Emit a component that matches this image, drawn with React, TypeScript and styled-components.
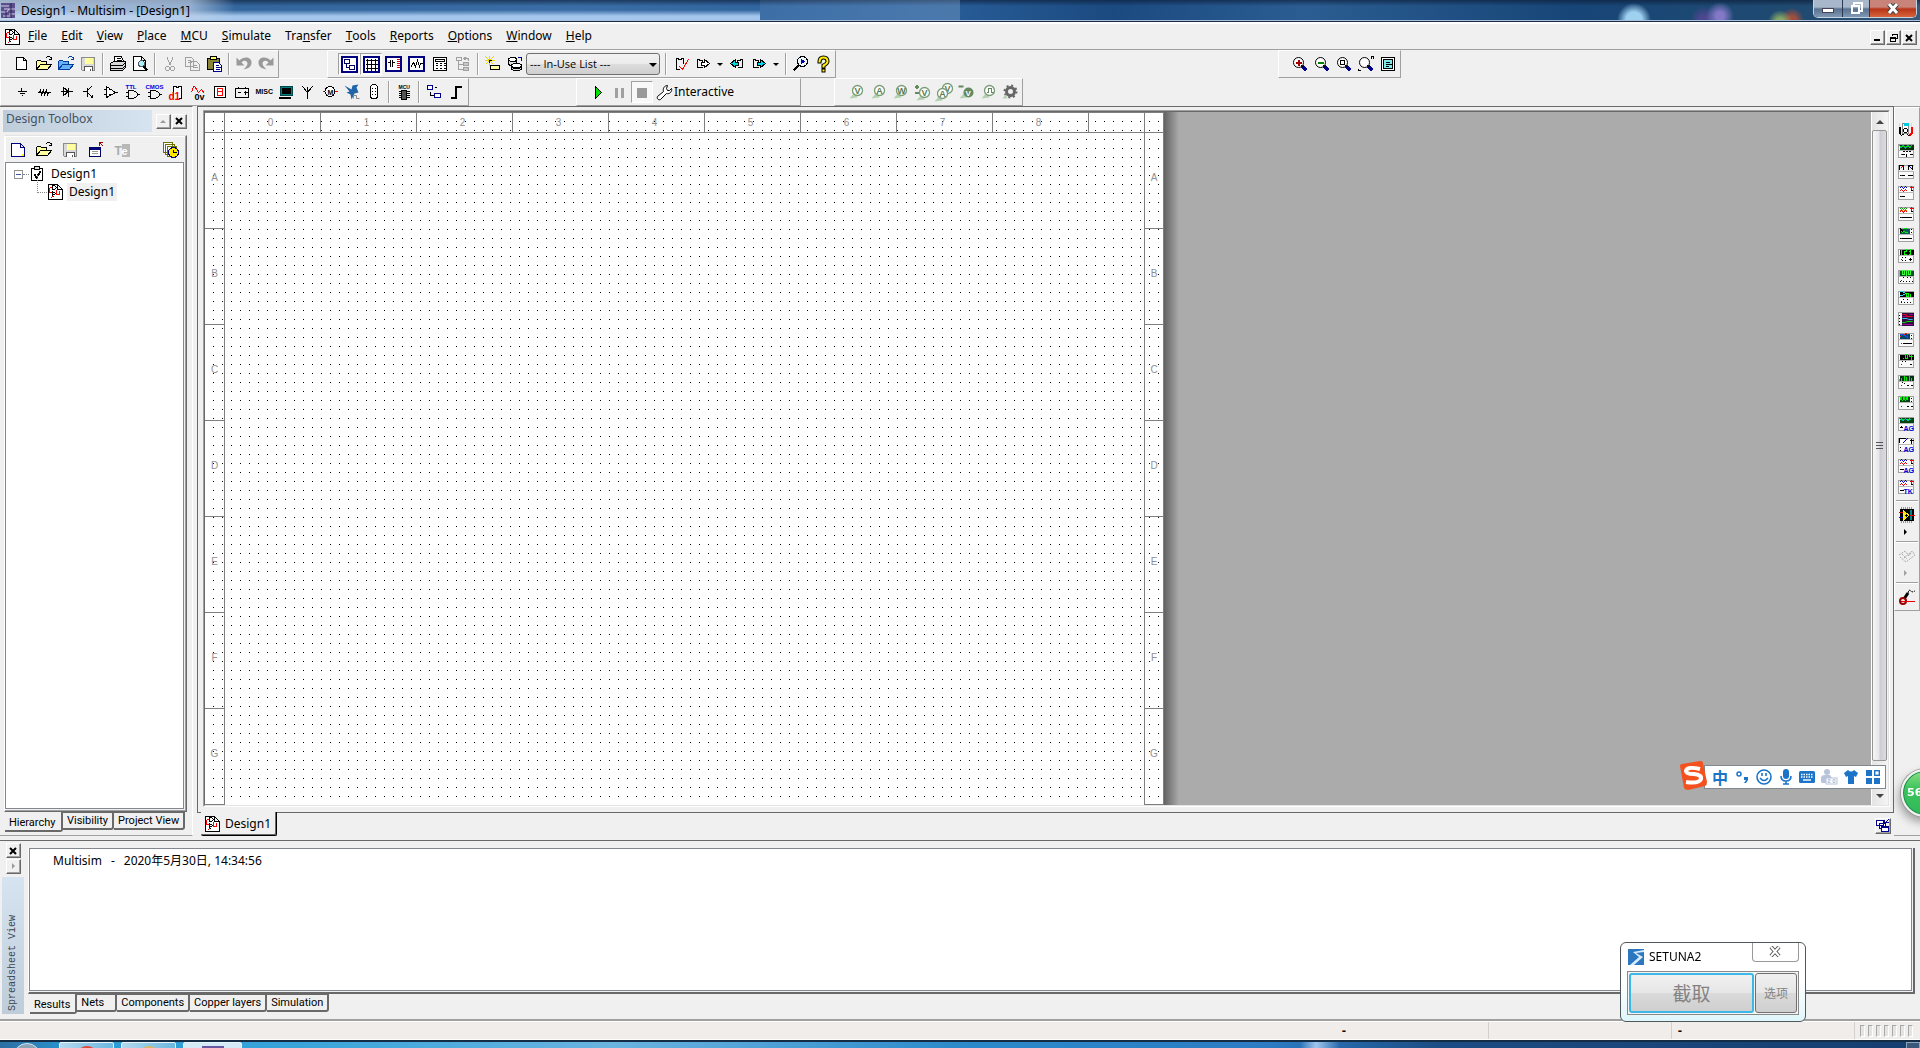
import React from "react";
import styled, { createGlobalStyle, css } from "styled-components";

const UI = `"Noto Sans", "Open Sans", "Noto Sans CJK SC", sans-serif`;
const SMALL = `Roboto, "Liberation Sans", Arial, sans-serif`;
const FACE = "#f0f0f0";
const MID = "#a0a0a0";
const DARK = "#696969";

const Global = createGlobalStyle`
  * { box-sizing: border-box; }
  body { margin: 0; background: ${FACE}; font: 12px/16px ${UI}; color: #000; overflow: hidden; }
  button, select, input { font: inherit; color: inherit; }
  button { padding: 0; border: 0; background: none; display: flex; align-items: center; justify-content: center; }
  svg { display: block; flex: none; }
  ul { list-style: none; margin: 0; padding: 0; }
`;

/* ---------- icon drawing helpers ---------- */

type LineProps = { d: string; c?: string; f?: string; w?: number };
const L = ({ d, c = "#000", f = "none", w = 1 }: LineProps) => (
  <path d={d} stroke={c} fill={f} strokeWidth={w} />
);
const T = ({ x, y, s = 6, c = "#000", children }: { x: number; y: number; s?: number; c?: string; children: React.ReactNode }) => (
  <text x={x} y={y} fontSize={s} fill={c} fontFamily="Liberation Sans, sans-serif" fontWeight="bold">{children}</text>
);
const Probe = ({ letter, x = 0, y = 0 }: { letter: string; x?: number; y?: number }) => (
  <g transform={`translate(${x} ${y})`} shapeRendering="auto">
    <path d="M1 14l5-6 3 5z" fill="#b4d2b0" />
    <circle cx="9" cy="6" r="5" fill="#fff" stroke="#7a9c76" strokeWidth="1.3" />
    <text x="9" y="9" textAnchor="middle" fontSize="9" fontWeight="bold" fill="#587c53" fontFamily="Liberation Sans, sans-serif">{letter}</text>
  </g>
);
const Glass = () => (
  <>
    <circle cx="6" cy="6" r="5" fill="#fff" stroke="#000" shapeRendering="auto" />
    <L d="M10 10l4 4" c="#00008b" w={3} />
    <L d="M9 9l2 2" />
  </>
);
const Sheet = () => <L d="M1 0H10L15 5V15H1Z M10 0V5H15" f="#fff" />;
const Circuit = () => (
  <>
    <Sheet />
    <L d="M2 3h3M2 8h2M9 5v5h3V6M3 14l2-2M2 3v5" c="#f00" />
    <L d="M5 1v4h2l2-2-2-2zM5 7l3 2-3 2zM5 11l2 2" f="#fff" />
  </>
);
const FolderArrow = ({ a, b }: { a: string; b: string }) => (
  <>
    <L d="M0 13V5l1-1h3l1 1h5v3" f={b} c={a} />
    <L d="M0 13l4-5h11l-4 5z" f={b} c={a} />
    <L d="M9 2l2-2h2l2 2M15 0v3h-3" c={a} />
  </>
);
const Floppy = () => (
  <>
    <L d="M1 1h13v13H2l-1-1z" f="#d8d8d8" c="#8c8c8c" />
    <rect x="4" y="1" width="8" height="6" fill="#ffff9c" />
    <L d="M4 14v-4h8v4M10 12v2" c="#555" f="#fff" />
  </>
);

const ICONS: Record<string, React.ReactNode> = {
  sheet: <L d="M2 1h7l3 3v9H2zM9 1v3h3" f="#fff" />,
  sheetBlue: <><L d="M1 1h9l4 4v9H1zM10 1v4h4" f="#fff" c="#000080" /><L d="M12 12h1v1h-1z" c="#ffee00" /></>,
  open: <FolderArrow a="#000" b="#ffffa0" />,
  openBlue: <FolderArrow a="#003c9c" b="#69b0f4" />,
  save: <Floppy />,
  print: <><L d="M4 5V0h7l2 5M6 2h4M6 4h5" f="#fff" /><L d="M0 7l3-2h12v6l-3 3H0z" f="#d8d8d8" /><L d="M0 9h12M0 12h12M12 9l3-3M12 12l3-3" /></>,
  preview: <><L d="M1 0h8l4 4v10H1zM9 0v4h4" f="#fff" /><circle cx="9" cy="7" r="3" fill="#a9f1f6" stroke="#556" /><L d="M11 10l4 4" w={2} /></>,
  cut: <><L d="M5 0v3l4 6M10 0v3L6 9" c="#a0a0a0" /><circle cx="5" cy="12" r="2" fill="none" stroke="#a0a0a0" /><circle cx="10" cy="12" r="2" fill="none" stroke="#a0a0a0" /></>,
  copy: <L d="M1 1h6l2 2v7H1zM3 4h3M3 6h4M6 5h6l3 3v6H6zM8 9h4M8 11h5" c="#a0a0a0" f="#f0f0f0" />,
  paste: <><L d="M1 2h12v11H1z" f="#8a8438" /><L d="M4 0h6v3H4z" f="#ffff60" /><L d="M7 6h5l3 3v6H7z" f="#fff" c="#00008b" /><L d="M9 9h3M9 11h5M9 13h4" c="#00008b" /></>,
  undo: <g shapeRendering="auto"><path d="M0 1v8h8L5 6c2-3 6-2 6 1 0 2-2 4-4 6 5-1 8-3 8-7 0-5-7-7-12-2z" fill="#999" /></g>,
  redo: <g shapeRendering="auto"><path d="M15 1v8H7l3-3C8 3 4 4 4 7c0 2 2 4 4 6-5-1-8-3-8-7 0-5 7-7 12-2z" fill="#999" /></g>,
  hier: <><L d="M0 0h15v15H0z" c="#000080" f="#fff" w={2} /><L d="M3 3h5v4H3zM8 9h5v4H8zM5 7v4h3" c="#000060" /></>,
  grid: <><L d="M0 0h15v15H0z" c="#000080" f="#fff" w={2} /><L d="M2 4h12M2 8h12M2 12h12M4 2v12M8 2v12M12 2v12" /></>,
  chart: <><L d="M0 0h15v14H0z" c="#000080" f="#fff" w={2} /><L d="M2 6h3M5 3v7M7 3v7M7 6h2" /><L d="M11 3h3M11 5h3M11 7h3M11 9h3M11 11h3" c="#d00" /></>,
  graph: <><L d="M0 0h15v14H0z" c="#000080" f="#fff" w={2} /><L d="M2 11l3-5 2 4 2-6 2 6 1-3h2" /></>,
  calc: <><L d="M1 1h13v13H1z" f="#fff" /><L d="M3 3h9v2H3z" /><L d="M3 7h2M7 7h2M11 7h2M3 9h2M7 9h2M11 9h2M3 12h2M7 12h2M11 12h2" /></>,
  tree: <><L d="M1 1h5v3H1zM3 4v9h4M3 8h4" c="#a0a0a0" /><L d="M8 6h5v3H8zM8 11h5v3H8zM8 2h5v2M11 0l-3 2 3 2" c="#a0a0a0" f="#c8c8c8" /></>,
  newComp: <><L d="M0 0l8 8M8 0L0 8M4-1v10M-1 4h10" c="#e8d800" /><L d="M3 4h3M4 3v3" /><L d="M5 9h9v4H5z" f="#ffffa0" /></>,
  db: <><L d="M1 3v5q4 3 8 0V3" f="#ddd" /><ellipse cx="5" cy="3" rx="4" ry="2" fill="#fff" stroke="#000" /><L d="M4 9v4q5 3 10 0V9" f="#ddd" /><ellipse cx="9" cy="9" rx="5" ry="2" fill="#fff" stroke="#000" /><L d="M4 11q5 3 10 0" /><L d="M10 1h4v3" c="#00008b" /></>,
  erc: <><L d="M3 13V2h2v1h3V2h2v5M2 13h4" /><L d="M6 10l3 3 6-10" c="#f00" /></>,
  out: <><L d="M2 11V3h2v1h3v3M2 11h5" /><L d="M6 6h3V3l5 4-5 4V9H6z" f="#fff" /></>,
  back: <><L d="M13 11V3h-2v1H8v3M13 11H8" /><L d="M9 6H6V3L1 7l5 4V9h3z" f="#00d8e8" /></>,
  fwd: <><L d="M2 11V3h2v1h3v3M2 11h5" /><L d="M6 6h3V3l5 4-5 4V9H6z" f="#00d8e8" /></>,
  find: <><circle cx="9" cy="5" r="5" fill="#eef6ff" stroke="#000" /><L d="M8 3l3 2-3 2z" c="#00a" f="#00a" /><L d="M5 9l-5 5" w={2} /></>,
  help: (
    <g shapeRendering="auto" fill="none" strokeLinecap="square">
      <path d="M4 5q0-4 4-4t4 4q0 2-4 4v1M8 14v0" stroke="#000" strokeWidth="4" />
      <path d="M4 5q0-4 4-4t4 4q0 2-4 4v1M8 14v0" stroke="#ffee00" strokeWidth="2" />
    </g>
  ),
  zin: <><Glass /><L d="M6 3v6M3 6h6" c="#a00000" w={2} /></>,
  zout: <><Glass /><L d="M3 6h6" c="#008000" w={2} /></>,
  zarea: <><Glass /><L d="M4 4h4v4H4z" /></>,
  zfit: <><Glass /><L d="M13 2V0h2v2M0 12v2h2" /></>,
  full: <><L d="M1 1h13v13H1z" f="#fff" /><L d="M3 3h9v9H3z" f="#80e8e8" /><L d="M5 6h4M5 8h6M5 10h3" /></>,
  ground: <L d="M7 3v4M3 7h9M5 9h5M7 11h1" />,
  res: <L d="M1 8h2l1-2 1 4 2-4 1 4 2-4 1 4 1-2h2" />,
  diode: <L d="M2 7h12M5 3v8l5-4zM10 3v9" />,
  bjt: <L d="M2 7h5M7 3v9M7 6l4-4M7 8l5 5M10 13h2v-3" />,
  opamp: <L d="M4 2v11l9-5zM1 5h3M1 10h3M13 8h2M6 5h2M6 10h2M7 9v2" f="#fff" />,
  ttl: <><T x={1} y={4} c="#0000e0">TTL</T><L d="M4 6h4q5 1 5 4t-5 4H4zM1 8h3M1 12h3M13 10h2" /></>,
  cmos: <><T x={-1} y={4} c="#0000e0">CMOS</T><L d="M4 6h4q5 1 5 4t-5 4H4zM1 8h3M1 12h3M13 10h2" /></>,
  mdig: <><L d="M5 13V2h3v1h2V2h3v12h-3" f="#fff" /><T x={0} y={15} s={10} c="#f00">d1</T></>,
  mixed: <><L d="M1 8q2-9 4-5t3 5l3-3 3 4" c="#f00" /><T x={4} y={15} s={9}>0v</T></>,
  ind: <><L d="M2 2h11v11H2z" f="#fff" /><L d="M5 4h5v7H5zM5 7h5" c="#f00" /></>,
  power: <L d="M1 4h13v9H1zM4 2v2M11 2v2M3 8h3M9 8h4M11 6v4" />,
  misc: <T x={-1} y={9} s={7}>MISC</T>,
  periph: <><L d="M2 2h12v9H2z" f="#008080" c="#004848" /><L d="M4 4h8v5H4z" f="#000" /><L d="M0 13h12" w={2} /></>,
  rf: <L d="M7 14V8L2 2M7 8l5-6M7 8V2" />,
  motor: <><L d="M0 7h3M12 7h3" c="#f00" /><circle cx="7.5" cy="7" r="5" fill="#fff" stroke="#000" /><T x={5} y={10} s={7}>M</T></>,
  ni: <g shapeRendering="auto"><path d="M0 1l7 4 1-4 6-1-2 3 2 5-4 1-3 6-1-5-4-2 3-1z" fill="#2164a8" /><path d="M9 14v-3h3v3h3" stroke="#888" fill="none" /></g>,
  conn: <><rect x="4" y="0" width="7" height="14" rx="3" fill="#fff" stroke="#000" /><L d="M6 3v1M6 6v1M6 9v1M9 3v1M9 6v1M9 9v1" /></>,
  mcu: <><T x={2} y={4} s={5}>MCU</T><L d="M5 6h5v9H5z" f="#555" /><L d="M2 7h3M2 9h3M2 11h3M2 13h3M10 7h3M10 9h3M10 11h3M10 13h3" /></>,
  block: <><L d="M1 1h5v4H1zM8 9h6v4H8z" c="#00008b" f="#fff" /><L d="M4 7v4h3M8 3h2" /></>,
  bus: <L d="M2 13h5V2h6" w={2} />,
  play: <L d="M5 2v12l6-6z" f="#00e000" />,
  pause: <L d="M4 3v10M10 3v10" c="#a0a0a0" w={3} />,
  stop: <rect x="2" y="3" width="10" height="10" fill="#999" />,
  wrench: <g shapeRendering="auto"><L d="M1 12l6-5c-1-3 1-6 4-6l-1 3 1 2 2 0 2-2c1 3-2 6-5 5l-6 6c-2 1-4-1-3-3z" f="#fff" /></g>,
  pv: <Probe letter="V" />,
  pa: <Probe letter="A" />,
  pw: <Probe letter="W" />,
  pvv: <><Probe letter="V" x={1} y={2} /><L d="M0 2h4M2 0v4M0 8h4" c="#64885f" w={2} /></>,
  pav: <><Probe letter="V" x={2} y={-2} /><Probe letter="A" x={-3} y={3} /></>,
  pref: <g shapeRendering="auto"><path d="M1 14l5-6 3 5z" fill="#b4d2b0" /><circle cx="10" cy="8" r="5" fill="#64885f" /><T x={7} y={11} s={8} c="#fff">V</T><L d="M0 2h5" c="#64885f" w={2} /></g>,
  pd: <><Probe letter="" /><L d="M6 8h2V4h3v4h2" c="#64885f" /></>,
  gear: <g shapeRendering="auto"><circle cx="8" cy="7" r="4" fill="none" stroke="#666" strokeWidth="3" /><circle cx="8" cy="7" r="6" fill="none" stroke="#666" strokeWidth="2" strokeDasharray="2 2.7" /><path d="M0 14l3-4 2 4z" fill="#b4d2b0" /></g>,
  circuit: <Circuit />,
  board: <><L d="M2 2h11v12H2z" f="#fff" /><L d="M5 0h5v3H5z" f="#ddd" /><L d="M5 8l2 3 4-6" w={2} /></>,
  close2: <><L d="M1 5h11v9H1z" f="#fff" c="#000060" /><L d="M1 6h11" c="#000080" w={2} /><L d="M3 9h6M3 11h6" c="#999" /><L d="M11 0h3M11 0v3M11 0l4 4" c="#900" /></>,
  rename: <><rect x="7" y="1" width="8" height="13" fill="#b8b8b8" /><T x={0} y={12} s={12} c="#aaa">T</T><T x={7} y={12} s={11} c="#fff">e</T></>,
  history: <><L d="M0 0h9v10H0zM2 2h9v10H2zM4 4h9v10H4z" f="#fff" c="#707000" /><circle cx="10" cy="10" r="5" fill="#ffe800" stroke="#000080" /><L d="M10 7v3h3" /></>,
  wins: <><L d="M1 2h7v5H1zM4 5h6v5H4z" f="#fff" c="#00008b" /><L d="M6 8h7v5H6z" c="#00008b" f="#fff" /><L d="M6 9h7M13 1l-3 3M9 1v3h4" c="#00008b" /></>,
};

const Icon = ({ name }: { name: string }) => (
  <svg width="16" height="16" viewBox="0 0 16 16" shapeRendering="crispEdges" overflow="visible" aria-hidden="true">
    <g transform="translate(.5 .5)">{ICONS[name]}</g>
  </svg>
);

/* Instruments share a grey frame, a small display on top and terminals below. */
type Inst = { name: string; screen: string; sw?: number; trace: [string, string][]; ports?: string; label?: string };
const WAVE = "M1 4l2-2 2 2 2-2 2 2 2-2 2 2";
const SCOPE: [string, string][] = [["M1 3l2-2 2 2 2-2 2 2", "#00d"], ["M1 6l2-2 2 2 2-2 2 2", "#e00"], ["M11 2h4M13 0v4", "#e00"]];
const INSTRUMENTS: Inst[] = [
  { name: "Multimeter", screen: "", trace: [] },
  { name: "Function generator", screen: "#083008", trace: [["M1 2l2 2 2-2 2 2 2-2 2 2 2-2", "#0d0"], ["M1 5l3-3 3 3 3-3 3 3", "#099"]], ports: "M4 8h2M7 8h2M10 8h2M3 11h3M8 10v3M11 11h3" },
  { name: "Wattmeter", screen: "#f0f0f0", trace: [["M1 5V1h4v4M10 5V1h4v4", "#000"], ["M2 4l2-2", "#e00"], ["M11 2l3 3", "#00e"]], ports: "M1 11h5M9 11h5" },
  { name: "Oscilloscope", screen: "#fff", sw: 10, trace: SCOPE, ports: "M1 11h5M12 5h2" },
  { name: "Four channel oscilloscope", screen: "#fff", sw: 10, trace: [["M1 3l2-2 2 2 2-2 2 2", "#0a0"], ["M1 5l2-2 2 2 2-2 2 2", "#e60"], ["M1 6l2-2 2 2 2-2 2 2", "#e00"], ["M11 2h4M13 0v4", "#e00"]], ports: "M1 11h12M12 5h2" },
  { name: "Bode plotter", screen: "#0a5858", sw: 10, trace: [["M1 1l3 4 3-2M5 1h4M6 5h3", "#0e0"], ["M2 5V1l3 4", "#000"]], ports: "M1 11h12M13 1v1M13 4v1" },
  { name: "Frequency counter", screen: "#000", trace: [["M3 1v5M6 1h2v2H6v3h2M10 1h2v5h-2M10 3h2", "#0f0"]], ports: "M3 9h1M6 9h1M3 12h1M6 12h1M10 11h3M12 9v3" },
  { name: "Word generator", screen: "#052", trace: [["M1 1v5M4 1h2v4H4zM8 1v5M10 1h2v4h-2z", "#3f3"]], ports: "M4 8h1M8 8h1M11 8h1M1 12h1M4 12h1M7 12h1M10 12h1M13 12h1" },
  { name: "Logic converter", screen: "#000", trace: [["M1 1h3l3 2-3 2H1", "#3de"], ["M8 3h2v3H8zM12 3v3", "#0f0"]], ports: "M4 9h1M8 9h1M2 12h1M5 12h1M8 12h1M11 12h1" },
  { name: "Logic analyzer", screen: "#000", trace: [["M1 3h5v2h8", "#f02"], ["M1 5h4M10 3h4", "#a0a"], ["M1 7h6l2 1h5", "#3cf"], ["M1 11h4l2-1h7", "#0e0"], ["M1 13h13", "#a0a"]] },
  { name: "IV analyzer", screen: "#046", sw: 10, trace: [["M1 5q4-5 9-3", "#e22"], ["M1 2h3l6 3", "#24f"]], ports: "M4 11h9M13 2v1M13 5v1" },
  { name: "Distortion analyzer", screen: "#000", trace: [["M4 5h1M7 1h2v4H7zM11 1v2h3M13 1v5", "#0e0"]], ports: "M3 8h1M6 8h1M11 11h2" },
  { name: "Spectrum analyzer", screen: "#031", trace: [["M1 6V4M3 6V3M6 6V1M8 6V2M11 6V1M13 6V3", "#0e0"]], ports: "M3 8h1M5 9h1M8 11h2M12 11h2" },
  { name: "Network analyzer", screen: "#041", sw: 10, trace: [["M1 1l3 4 3-4 3 4M1 5l3-4 3 4 3-4", "#0e0"]], ports: "M8 11h2M12 11h2M13 2v1M13 5v1" },
  { name: "Agilent function generator", screen: "#041", trace: [[WAVE, "#0e0"], ["M1 2l3 2 3-2 3 2 3-2", "#0bb"]], label: "AG", ports: "M1 11h3M3 9v2" },
  { name: "Agilent multimeter", screen: "#fff", sw: 10, trace: [["M1 5V1h6", "#000"], ["M4 6l5-5", "#00d"]], label: "AG", ports: "M11 3h4M13 1v5M2 9v1M2 12v1" },
  { name: "Agilent oscilloscope", screen: "#fff", sw: 10, trace: SCOPE, label: "AG", ports: "M1 11h4M12 5h2" },
  { name: "Tektronix oscilloscope", screen: "#fff", sw: 10, trace: SCOPE, label: "TK", ports: "M1 11h4M12 5h2" },
];

const InstIcon = ({ it }: { it: Inst }) => (
  <svg width="16" height="16" viewBox="0 0 16 16" shapeRendering="crispEdges" overflow="visible" aria-hidden="true">
    <g transform="translate(-.5 .5)">
      {it.screen === "" ? (
        <>
          <L d="M1 0v4M13 0v4" c="#fe0" />
          <L d="M1 4v7" w={2} />
          <L d="M1 11l2 2 4-3 3 3 2-1" />
          <L d="M13 4v7l-2 2" c="#f00" w={2} />
          <L d="M4 1h6v10H4z" f="#fff" c="#888" />
          <L d="M5 2h5" c="#0cd" w={3} />
          <circle cx="7" cy="8" r="2" stroke="#000" fill="#fff" />
        </>
      ) : (
        <>
          <L d="M0 1h15v13H0z" c="#a0a0a0" f="#fafafa" />
          {it.name === "Logic analyzer"
            ? <rect x="3" y="1" width="12" height="13" fill="#301040" />
            : <rect x="1" y="1" width={it.sw ?? 14} height="6" fill={it.screen} />}
          {it.name === "Logic analyzer" && <L d="M1 3v1M1 6v1M1 9v1M1 12v1" />}
          {it.name !== "Logic analyzer" && <L d="M0 7h15" c="#b8b8b8" />}
          <g transform={it.name === "Logic analyzer" ? "translate(3 0) scale(.8 1)" : undefined}>
            {it.trace.map(([d, c], i) => <L key={i} d={d} c={c} />)}
          </g>
          {it.ports && <L d={it.ports} />}
          {it.ports && !it.label && <L d="M2 11h1" c="#c00" />}
          {it.label && <T x={5} y={14} s={7} c="#00d">{it.label}</T>}
        </>
      )}
    </g>
  </svg>
);

/* ---------- window frame ---------- */

const Desktop = styled.div`
  height: 100vh;
  display: flex;
  flex-direction: column;
  background: ${FACE};
`;

const TitleBar = styled.header`
  height: 22px;
  flex: none;
  display: flex;
  align-items: flex-start;
  justify-content: space-between;
  border-bottom: 1px solid #1c2c44;
  box-shadow: inset 0 -1px #a9c0dc;
  background:
    radial-gradient(circle at 1634px 20px, #9ed0f0 0 8px, transparent 17px),
    radial-gradient(circle at 1720px 16px, rgba(142, 126, 208, .9) 0 4px, transparent 14px),
    radial-gradient(circle at 1704px 20px, rgba(110, 70, 160, .6) 0 4px, transparent 14px),
    radial-gradient(circle at 1780px 22px, rgba(140, 176, 100, .9) 0 4px, transparent 12px),
    radial-gradient(circle at 1792px 20px, rgba(190, 80, 50, .8) 0 4px, transparent 12px),
    linear-gradient(90deg, rgba(205, 218, 238, .75) 0, rgba(190, 208, 232, .7) 190px, transparent 235px),
    linear-gradient(180deg, transparent 10px, rgba(176, 208, 244, .9) 16px) 0 0 / 760px 100% no-repeat,
    linear-gradient(90deg, rgba(160, 190, 225, .1), rgba(160, 190, 225, .3)) 760px 0 / 200px 100% no-repeat,
    linear-gradient(180deg, rgba(10, 24, 48, .6), transparent 6px),
    linear-gradient(100deg, #2f6299 0, #3a6da5 30%, #2a5f9a 48%, #1b4a80 58%, #2b5d92 68%, #174577 82%, #204a70 94%, #3a5878 100%);
`;
const Caption = styled.h1`
  margin: 0;
  padding: 3px 0 0 1px;
  display: flex;
  gap: 6px;
  font: 12px/16px ${UI};
`;
const FrameButtons = styled.div`
  display: flex;
  height: 18px;
  margin-right: 3px;
  border: 1px solid #c4d2e2;
  border-top: 0;
  border-radius: 0 0 5px 5px;
  overflow: hidden;
  background: #2a3a50;
  gap: 1px;
`;
const FrameButton = styled.button<{ $w: number; $close?: boolean }>`
  width: ${(p) => p.$w}px;
  background: ${(p) => (p.$close
    ? "linear-gradient(#c88478 0 7px, #b83418 9px, #d8643c)"
    : "linear-gradient(#a8b8ca 0 7px, #5a7290 9px, #8098b4)")};
`;

const MenuBar = styled.nav`
  height: 28px;
  flex: none;
  display: flex;
  align-items: center;
  padding: 0 3px 0 4px;
  border-top: 2px solid #fff;
  border-bottom: 1px solid ${MID};
`;
const MenuList = styled.ul`
  flex: 1;
  display: flex;
  gap: 14px;
  padding: 0 0 2px 8px;
`;
const MenuItem = styled.button`
  height: 20px;
  white-space: pre;
`;
const raised = css`
  background: ${FACE};
  border: 1px solid;
  border-color: #fff ${DARK} ${DARK} #fff;
  box-shadow: inset -1px -1px ${MID};
`;
const MiniButton = styled.button`
  ${raised}
  width: 15px;
  height: 15px;
  flex: none;
`;
const MiniGroup = styled.div`
  display: flex;
  gap: 1px;
  padding-top: 2px;
`;

const ToolRow = styled.div`
  height: 28px;
  flex: none;
  display: flex;
`;
const ToolBar = styled.div<{ $gap?: number; $w?: number }>`
  display: flex;
  align-items: center;
  margin-left: ${(p) => p.$gap ?? 0}px;
  width: ${(p) => (p.$w ? `${p.$w}px` : "auto")};
  padding: 0 1px 0 10px;
  border: 1px solid;
  border-color: #fff ${MID} ${MID} #fff;
`;
const Tool = styled.button<{ $on?: boolean; $wide?: boolean }>`
  width: ${(p) => (p.$wide ? 24 : 22)}px;
  height: 22px;
  flex: none;
  ${(p) => p.$on && css`
    background: #f8f8f8;
    border: 1px solid;
    border-color: ${MID} #fff #fff ${MID};
  `}
`;
const Sep = styled.span`
  width: 8px;
  height: 22px;
  flex: none;
  display: flex;
  justify-content: center;
  &::before { content: ""; width: 2px; background: linear-gradient(90deg, ${MID} 50%, #fff 50%); }
`;
const Drop = styled.button`
  width: 12px;
  height: 22px;
  &::before { content: ""; border: 3px solid transparent; border-top-color: #000; margin-top: 3px; }
`;
const ComboWrap = styled.label`
  width: 136px;
  position: relative;
  &::after {
    content: "";
    position: absolute;
    right: 5px;
    top: 10px;
    border: 4px solid transparent;
    border-top-color: #000;
    pointer-events: none;
  }
`;
const Combo = styled.select`
  width: 134px;
  height: 22px;
  display: block;
  appearance: none;
  padding: 0 3px;
  border: 1px solid #707070;
  border-radius: 3px;
  background: linear-gradient(#f2f2f2, #ebebeb 50%, #dddddd 50%, #cfcfcf);
  font: 11px/16px "Open Sans", "Noto Sans", sans-serif;
`;
const ModeButton = styled.button`
  height: 22px;
  padding: 0 3px;
  gap: 2px;
`;

/* ---------- work area ---------- */

const Work = styled.main`
  flex: 1;
  min-height: 0;
  display: flex;
`;
const LeftDock = styled.aside`
  width: 193px;
  flex: none;
  margin: 0 4px 4px 0;
  display: flex;
  flex-direction: column;
  padding: 3px 5px 3px 3px;
  border-top: 1px solid ${DARK};
  border-right: 1px solid #fff;
  border-bottom: 1px solid ${MID};
`;
const DockHead = styled.div`
  height: 22px;
  display: flex;
  align-items: center;
  gap: 1px;
`;
const DockTitle = styled.h2`
  flex: 1;
  height: 22px;
  margin: 0 3px 0 0;
  padding: 0 3px;
  font: 12px/18px ${UI};
  color: #44525f;
  background: linear-gradient(90deg, #bfcddb, #d6e4f2);
`;
const Panel = styled.section`
  flex: 1;
  min-height: 0;
  margin: 3px 0 0 1px;
  display: flex;
  flex-direction: column;
  border: 1px solid;
  border-color: #e3e3e3 ${DARK} ${DARK} #fff;
  box-shadow: inset -1px -1px ${MID}, inset 1px 1px #fff;
  padding: 1px 2px 2px 0;
`;
const PanelTools = styled.div`
  height: 25px;
  flex: none;
  display: flex;
  align-items: center;
  justify-content: space-between;
  padding: 0 2px;
`;
const PanelGroup = styled.div`
  display: flex;
  gap: 4px;
`;
const Tree = styled.ul`
  flex: 1;
  border: 1px solid #828790;
  background: #fff;
`;
const TreeRow = styled.li<{ $child?: boolean }>`
  height: 18px;
  display: flex;
  align-items: center;
  margin-top: ${(p) => (p.$child ? 0 : 2)}px;
  padding-left: ${(p) => (p.$child ? 31 : 8)}px;
`;
const Expander = styled.button`
  width: 9px;
  height: 9px;
  border: 1px solid #919191;
  background: #fff;
  &::before { content: ""; width: 5px; height: 1px; background: #3b5a9a; }
`;
const Twig = styled.span<{ $child?: boolean }>`
  width: ${(p) => (p.$child ? 10 : 6)}px;
  height: ${(p) => (p.$child ? 18 : 1)}px;
  margin-bottom: ${(p) => (p.$child ? 17 : 0)}px;
  border: 0 dotted #888;
  border-width: ${(p) => (p.$child ? "0 0 1px 1px" : "1px 0 0")};
`;
const NodeLabel = styled.span<{ $sel?: boolean }>`
  margin-left: 4px;
  padding: 0 2px;
  line-height: 18px;
  background: ${(p) => (p.$sel ? FACE : "none")};
`;
const Tabs = styled.div`
  height: 20px;
  flex: none;
  display: flex;
  align-items: flex-start;
  margin-left: 2px;
`;
const Tab = styled.button<{ $on?: boolean; $w?: number }>`
  height: ${(p) => (p.$on ? 20 : 18)}px;
  padding: ${(p) => (p.$on ? "4px 5px 0 4px" : "1px 4px 0 4px")};
  min-width: ${(p) => p.$w ?? 0}px;
  justify-content: flex-start;
  font: 11px/14px ${SMALL};
  white-space: pre;
  border: solid ${DARK};
  border-width: 0 2px 2px 0;
  border-color: ${MID} ${DARK} ${DARK} #fff;
  border-radius: 0 0 3px 0;
  ${(p) => !p.$on && css`border-top: 1px solid ${DARK};`}
`;

const Mdi = styled.section`
  flex: 1;
  min-width: 0;
  display: flex;
  flex-direction: column;
`;
const MdiClient = styled.div`
  flex: 1;
  min-height: 0;
  display: flex;
  border: 1px solid ${DARK};
  border-bottom: 0;
  padding: 3px 3px 5px 5px;
`;
const Frame = styled.div`
  flex: 1;
  min-width: 0;
  display: flex;
  border: 1px solid;
  border-color: ${MID} #fff #fff ${MID};
`;
const Viewport = styled.div`
  flex: 1;
  min-width: 0;
  display: flex;
  overflow: hidden;
  background: #ababab;
  border: 1px solid;
  border-color: ${DARK} #e3e3e3 #e3e3e3 ${DARK};
`;
const SheetArea = styled.div`
  flex: 1;
  min-width: 0;
  display: flex;
  overflow: hidden;
`;
const DrawingSheet = styled.div`
  width: 959px;
  flex: none;
  display: grid;
  grid-template-columns: 20px 1fr 19px;
  grid-template-rows: 20px 1fr;
  border: solid #7f7f7f;
  border-width: 1px 1px 0 0;
  background: conic-gradient(from 270deg at 1px 1px, #000 90deg, transparent 0) 8px 8px / 9px 9px #fff;
  font: 10px/12px "Liberation Sans", Arial, sans-serif;
  color: #909090;
`;
const SheetShadow = styled.div`
  width: 15px;
  flex: none;
  background: linear-gradient(90deg, #626262, #ababab);
`;
const Corner = styled.div<{ $right?: boolean }>`
  border: solid #7f7f7f;
  border-width: ${(p) => (p.$right ? "0 0 1px 1px" : "0 1px 1px 0")};
`;
const TopRuler = styled.div`
  display: flex;
  border-bottom: 1px solid #7f7f7f;
`;
const SideRuler = styled.div<{ $right?: boolean }>`
  overflow: hidden;
  border: solid #7f7f7f;
  border-width: ${(p) => (p.$right ? "0 0 0 1px" : "0 1px 0 0")};
`;
const HCell = styled.div`
  width: 96px;
  padding: 4px 4px 0 0;
  text-align: center;
  border-right: 1px solid #7f7f7f;
`;
const VCell = styled.div`
  height: 96px;
  display: flex;
  align-items: center;
  justify-content: center;
  padding-bottom: 6px;
  border-bottom: 1px solid #7f7f7f;
`;
const ScrollBar = styled.div`
  width: 17px;
  flex: none;
  display: flex;
  flex-direction: column;
  padding-right: 1px;
  border-left: 1px solid #fff;
  background: linear-gradient(90deg, #e4e4e4, #f4f4f4);
`;
const ScrollArrow = styled.button<{ $down?: boolean }>`
  height: 18px;
  flex: none;
  &::before {
    content: "";
    border: 4px solid transparent;
    ${(p) => (p.$down ? "border-top-color: #444; margin-top: 4px;" : "border-bottom-color: #444; margin-bottom: 2px;")}
  }
`;
const Thumb = styled.div`
  flex: 1;
  margin-bottom: 26px;
  display: flex;
  flex-direction: column;
  align-items: center;
  justify-content: center;
  gap: 2px;
  border: 1px solid #959595;
  border-radius: 2px;
  background: linear-gradient(90deg, #f6f6f6, #e6e6ea 45%, #ccccd2 55%, #dcdce0);
  & > i { width: 7px; height: 1px; background: #555; }
`;
const MdiTabs = styled.div`
  height: 28px;
  flex: none;
  display: flex;
  justify-content: space-between;
  align-items: flex-start;
  padding: 0 3px 0 4px;
  background: linear-gradient(${DARK}, ${DARK}) 0 0 / 100% 1px no-repeat;
`;
const MdiTab = styled.button`
  height: 24px;
  padding: 1px 5px 0 3px;
  gap: 5px;
  background: ${FACE};
  border: solid #000;
  border-width: 0 1px 1px 0;
  box-shadow: inset -1px -1px ${DARK};
  border-radius: 0 0 2px 2px;
`;
const WindowList = styled.button`
  ${raised}
  width: 16px;
  height: 16px;
  margin-top: 6px;
  overflow: hidden;
`;
const RightDock = styled.aside`
  width: 26px;
  flex: none;
  margin-bottom: 4px;
  border-top: 1px solid ${MID};
  border-bottom: 1px solid ${MID};
`;
const InstBar = styled.div`
  display: flex;
  flex-direction: column;
  align-items: center;
  padding: 11px 0 2px;
  border: 1px solid;
  border-color: #fff ${MID} ${MID} #fff;
`;
const InstButton = styled.button<{ $tall?: boolean }>`
  width: 22px;
  height: ${(p) => (p.$tall ? 22 : 21)}px;
`;
const HSep = styled.span`
  width: 22px;
  height: 7px;
  flex: none;
  background: linear-gradient(${MID} 50%, #fff 50%) center / 100% 2px no-repeat;
`;
const Flyout = styled.button<{ $off?: boolean }>`
  height: 12px;
  width: 22px;
  &::before { content: ""; border: 3px solid transparent; border-left-color: ${(p) => (p.$off ? MID : "#000")}; }
`;

/* ---------- spreadsheet view, status, taskbar ---------- */

const Spread = styled.section`
  height: 180px;
  flex: none;
  display: flex;
  gap: 4px;
  padding: 2px 5px 5px 2px;
  border-top: 1px solid ${DARK};
  border-bottom: 1px solid ${MID};
`;
const SpreadSide = styled.div`
  width: 22px;
  flex: none;
  display: flex;
  flex-direction: column;
  align-items: center;
  gap: 1px;
`;
const SpreadTitle = styled.h2`
  flex: 1;
  width: 22px;
  margin: 2px 0 0;
  padding: 3px 4px;
  writing-mode: vertical-rl;
  transform: rotate(180deg);
  font: 10px/14px "Liberation Mono", monospace;
  color: #3c4650;
  background: linear-gradient(#bfcddb, #d6e4f2);
`;
const SpreadBody = styled.div`
  flex: 1;
  min-width: 0;
  display: flex;
  flex-direction: column;
`;
const Results = styled.div`
  flex: 1;
  min-height: 0;
  margin-top: 5px;
  display: flex;
  border: solid;
  border-width: 0 2px 2px 1px;
  border-color: #fff ${DARK} ${DARK} #fff;
  padding: 0 1px 1px 0;
`;
const Log = styled.div`
  flex: 1;
  display: flex;
  gap: 9px;
  padding: 4px 23px;
  border: 1px solid #828790;
  background: #fff;
`;
const StatusBar = styled.footer`
  height: 20px;
  flex: none;
  display: flex;
  border-top: 1px solid ${MID};
  border-bottom: 1px solid #fff;
  background: #f0edeb;
  box-shadow: inset 0 1px #fff;
`;
const StatusCell = styled.span<{ $w?: number; $end?: boolean }>`
  flex: ${(p) => (p.$w ? "none" : 1)};
  width: ${(p) => (p.$w ? `${p.$w}px` : "auto")};
  margin: 1px 0 0;
  padding: 1px 0 0 6px;
  border-right: 1px solid ${(p) => (p.$end ? "transparent" : "#d4d0ce")};
  font-weight: bold;
`;
const Progress = styled.span`
  width: 65px;
  flex: none;
  display: flex;
  gap: 3px;
  padding: 4px 0 2px 5px;
  & > i { width: 5px; border: 1px solid; border-color: #a8a8a8 #fff #fff #a8a8a8; background: #e4e4e0; }
`;
const Taskbar = styled.div`
  height: 8px;
  flex: none;
  display: flex;
  overflow: hidden;
  border-top: 2px solid #142c44;
  background:
    linear-gradient(90deg, transparent, rgba(190, 220, 255, .8) 40%, transparent) 1300px 0 / 40px 100% no-repeat,
    linear-gradient(90deg, #2a6ea4 0, #2a9ad4 4%, #38a4da 15%, #6ab4e0 32%, #2c8aca 50%, #2c7cc4 66%, #1c4c84 75%, #163e70 100%);
`;
const Orb = styled.button`
  width: 28px;
  height: 28px;
  margin: 1px 18px 0 13px;
  flex: none;
  border: 1px solid #d4e4ee;
  border-radius: 50%;
  background: #8aa4b8;
`;
const TaskButton = styled.button<{ $dot: string; $active?: boolean }>`
  width: ${(p) => (p.$active ? 59 : 55)}px;
  height: 30px;
  flex: none;
  margin-right: 7px;
  border: 1px solid #e4f4fc;
  border-radius: 2px;
  align-items: flex-start;
  background: ${(p) => (p.$active ? "#d4eaf6" : "linear-gradient(90deg, #b4d8ee, #6cb8e0)")};
  &::before { content: ""; width: 22px; height: 22px; margin-top: 3px; border-radius: ${(p) => (p.$active ? 0 : 11)}px; background: ${(p) => p.$dot}; }
`;
const TaskSpace = styled.div`flex: 1;`;
const ShowDesktop = styled.button`
  width: 14px;
  height: 10px;
  border: 1px solid #8ca4bc;
  background: #3c5878;
`;

/* ---------- floating windows ---------- */

const Setuna = styled.section`
  position: fixed;
  right: 114px;
  bottom: 26px;
  width: 186px;
  height: 80px;
  padding: 0 6px 6px;
  display: flex;
  flex-direction: column;
  border: 1px solid #50585c;
  border-radius: 6px;
  background: linear-gradient(#fff 50%, #dff6fa);
`;
const SetunaHead = styled.div`
  height: 28px;
  display: flex;
  align-items: flex-start;
  gap: 5px;
  padding-left: 1px;
  & > svg { margin-top: 6px; }
`;
const SetunaTitle = styled.h2`
  flex: 1;
  margin: 0;
  font: 12px/28px ${UI};
`;
const SetunaClose = styled.button`
  width: 47px;
  height: 19px;
  border: 1px solid #999;
  border-top: 0;
  border-radius: 0 0 4px 4px;
`;
const SetunaBody = styled.div`
  flex: 1;
  display: flex;
  gap: 1px;
  padding: 1px;
  border: 1px solid #888;
  background: #f4f4f4;
`;
const SetunaButton = styled.button<{ $main?: boolean }>`
  flex: ${(p) => (p.$main ? 1 : "none")};
  width: 42px;
  border: ${(p) => (p.$main ? "2px solid #3cb8e8" : "1px solid #707070")};
  border-radius: 3px;
  background: linear-gradient(#f0f0f0, #e6e6e6 50%, #dadada 50%, #cfcfcf);
  color: #838383;
  font: ${(p) => (p.$main ? 19 : 12)}px/24px "Noto Sans CJK SC", sans-serif;
`;
const Ime = styled.div`
  position: fixed;
  right: 34px;
  top: 765px;
  width: 182px;
  height: 24px;
  display: flex;
  align-items: center;
  justify-content: space-around;
  padding: 0 1px 0 4px;
  border: 1px solid #808890;
  background: #fff;
`;
const ImeLogo = styled.div`
  position: fixed;
  right: 212px;
  top: 761px;
`;
const ImeButton = styled.button`
  width: 22px;
  height: 20px;
  font: bold 16px/20px "Noto Sans CJK SC", sans-serif;
  color: #1c74c8;
`;
const Ball = styled.div`
  position: fixed;
  right: -29px;
  top: 769px;
  width: 48px;
  height: 48px;
  padding: 14px 0 0 4px;
  border: 2px solid #f0f4f0;
  border-radius: 50%;
  background: linear-gradient(#8ce088, #3cc45c 40%, #2fb858);
  box-shadow: 0 0 0 1px #999, inset 0 0 0 1px #1c8a50, -2px 5px 10px rgba(0, 0, 0, .35);
  font: bold 11px/16px "DejaVu Sans", sans-serif;
  color: #fff;
`;

const B = "#1c74c8";
const IME: [string, React.ReactNode][] = [
  ["Chinese", "中"],
  ["Punctuation", <svg width="14" height="16" viewBox="0 0 14 16"><circle cx="4" cy="5" r="2" fill="none" stroke={B} strokeWidth="1.5" /><path d="M9 8h4v3l-2 3H9l2-3H9z" fill={B} /></svg>],
  ["Emoji", <svg width="16" height="16" viewBox="0 0 16 16" fill="none" stroke={B} strokeWidth="1.6"><circle cx="8" cy="8" r="7" /><path d="M4 9q4 5 8 0M6 4v3M10 4v3" /></svg>],
  ["Voice", <svg width="14" height="16" viewBox="0 0 14 16"><rect x="4" y="0" width="6" height="10" rx="3" fill={B} /><path d="M2 7q0 5 5 5t5-5M7 12v3M4 15h6" fill="none" stroke={B} strokeWidth="1.6" /></svg>],
  ["Keyboard", <svg width="16" height="12" viewBox="0 0 16 12"><rect width="16" height="12" rx="1.5" fill={B} /><path d="M2 3.5h12M2 6h12" stroke="#fff" strokeDasharray="1.5 1" strokeWidth="1.4" /><path d="M4 9h8" stroke="#fff" strokeWidth="1.4" /></svg>],
  ["Account", <svg width="17" height="16" viewBox="0 0 17 16"><circle cx="6" cy="3" r="3" fill="#b8c4da" /><path d="M0 13V9q0-3 4-3h5l2 3v5H1z" fill="#b8c4da" /><rect x="5" y="9" width="11" height="6" fill="#fff" stroke="#b8c4da" /><path d="M7 10.500h2v1.500h-2v1.500h2.500M12 10.500h2v3h-2z" fill="none" stroke="#b8c4da" /></svg>],
  ["Skin", <svg width="14" height="14" viewBox="0 0 14 14"><path d="M4 0q3 3 6 0l4 3-2 4-2-1v8H4V6L2 7 0 3z" fill={B} /></svg>],
  ["Toolbox", <svg width="14" height="14" viewBox="0 0 14 14"><path d="M0 0h6v6H0zM0 8h6v6H0zM8 8h6v6H8z" fill={B} /><rect x="8.700" y=".7" width="4.600" height="4.600" fill="none" stroke={B} strokeWidth="1.400" /></svg>],
];

const MENU: [string, string, string][] = [
  ["", "F", "ile"], ["", "E", "dit"], ["", "V", "iew"], ["", "P", "lace"], ["", "M", "CU"], ["", "S", "imulate"],
  ["Tra", "n", "sfer"], ["", "T", "ools"], ["", "R", "eports"], ["", "O", "ptions"], ["", "W", "indow"], ["", "H", "elp"],
];

/* A "|" entry is a separator, a "v" entry a drop-down arrow. */
const Tools = ({ items, on = [], wide = [] }: { items: string[]; on?: string[]; wide?: string[] }) => (
  <>
    {items.map((n, i) =>
      n === "|" ? <Sep key={i} /> : n === "v" ? <Drop key={i} aria-label="More" /> : (
        <Tool key={i} aria-label={n} $on={on.includes(n)} $wide={wide.includes(n)}><Icon name={n} /></Tool>
      ))}
  </>
);

const Cross = () => (
  <svg width="9" height="8" viewBox="0 0 9 8"><path d="M1 1l6 6M7 1L1 7" stroke="#000" strokeWidth="2" /></svg>
);

export default function App() {
  return (
    <Desktop>
      <Global />
      <TitleBar>
        <Caption>
          <svg width="14" height="16" viewBox="0 0 14 16">
            <rect width="14" height="15" fill="#5c508c" />
            <path d="M0 3h8M3 6h11M0 9h6l2-3M8 11h6M2 13h8" stroke="#d4cce8" fill="none" />
            <path d="M10 0v15M5 8v7" stroke="#2c2458" />
          </svg>
          Design1 - Multisim - [Design1]
        </Caption>
        <FrameButtons>
          <FrameButton $w={28} aria-label="Minimize"><svg width="12" height="10"><rect x=".5" y="4.500" width="11" height="4" fill="#fff" stroke="#445" /></svg></FrameButton>
          <FrameButton $w={26} aria-label="Restore"><svg width="13" height="13" fill="none" stroke="#fff" strokeWidth="2"><path d="M4 3V1h8v8h-2" /><rect x="2" y="4" width="7" height="7" /></svg></FrameButton>
          <FrameButton $w={46} $close aria-label="Close"><svg width="13" height="12"><path d="M2 1l8 9M10 1l-8 9" stroke="#444" strokeWidth="5" /><path d="M2 1l8 9M10 1l-8 9" stroke="#fff" strokeWidth="3" /></svg></FrameButton>
        </FrameButtons>
      </TitleBar>

      <MenuBar>
        <Icon name="circuit" />
        <MenuList>
          {MENU.map(([a, u, b]) => (
            <li key={a + u + b}><MenuItem>{a}<u>{u}</u>{b}</MenuItem></li>
          ))}
        </MenuList>
        <MiniGroup>
          <MiniButton aria-label="Minimize sheet"><svg width="9" height="9"><rect x="1" y="6" width="6" height="2" /></svg></MiniButton>
          <MiniButton aria-label="Restore sheet"><svg width="9" height="9" fill="none" stroke="#000" shapeRendering="crispEdges"><path d="M3 3V1h5v4H6M3 1.500h5" /><path d="M1 4h5v4H1zM1 5h5" /></svg></MiniButton>
          <MiniButton aria-label="Close sheet"><Cross /></MiniButton>
        </MiniGroup>
      </MenuBar>

      <ToolRow>
        <ToolBar>
          <Tools items={["sheet", "open", "openBlue", "save", "|", "print", "preview", "|", "cut", "copy", "paste", "|", "undo", "redo"]} />
        </ToolBar>
        <ToolBar $gap={48}>
          <Tools items={["hier", "grid", "chart", "graph", "calc", "tree", "|", "newComp", "db"]} on={["hier", "grid"]} wide={["graph", "calc"]} />
          <ComboWrap aria-label="In-use list">
            <Combo defaultValue="list"><option value="list">--- In-Use List ---</option></Combo>
          </ComboWrap>
          <Tools items={["|", "erc", "out", "v", "back", "fwd", "v", "|", "find", "help"]} />
        </ToolBar>
        <ToolBar $gap={442}>
          <Tools items={["zin", "zout", "zarea", "zfit", "full"]} />
        </ToolBar>
      </ToolRow>
      <ToolRow>
        <ToolBar>
          <Tools items={["ground", "res", "diode", "bjt", "opamp", "ttl", "cmos", "mdig", "mixed", "ind", "power", "misc", "periph", "rf", "motor", "ni", "conn", "|", "mcu", "|", "block", "bus"]} />
        </ToolBar>
        <ToolBar $gap={107} $w={225}>
          <Tools items={["play", "pause", "stop"]} on={["stop"]} />
          <ModeButton><Icon name="wrench" />Interactive</ModeButton>
        </ToolBar>
        <ToolBar $gap={33}>
          <Tools items={["pv", "pa", "pw", "pvv", "pav", "pref", "pd", "gear"]} />
        </ToolBar>
      </ToolRow>

      <Work>
        <LeftDock>
          <DockHead>
            <DockTitle>Design Toolbox</DockTitle>
            <MiniButton aria-label="Collapse"><svg width="7" height="5"><path d="M0 4l3-3 3 3z" fill="#999" /></svg></MiniButton>
            <MiniButton aria-label="Close toolbox"><Cross /></MiniButton>
          </DockHead>
          <Panel>
            <PanelTools>
              <PanelGroup>
                {["sheetBlue", "open", "save", "close2", "rename"].map((n) => (
                  <Tool key={n} aria-label={n}><Icon name={n} /></Tool>
                ))}
              </PanelGroup>
              <Tool aria-label="history"><Icon name="history" /></Tool>
            </PanelTools>
            <Tree>
              <TreeRow><Expander aria-label="Collapse Design1" /><Twig /><Icon name="board" /><NodeLabel>Design1</NodeLabel></TreeRow>
              <TreeRow $child><Twig $child /><Icon name="circuit" /><NodeLabel $sel>Design1</NodeLabel></TreeRow>
            </Tree>
          </Panel>
          <Tabs>
            <Tab $on $w={58}>Hierarchy</Tab>
            <Tab $w={48}>Visibility</Tab>
            <Tab $w={70}>Project View</Tab>
          </Tabs>
        </LeftDock>

        <Mdi>
          <MdiClient>
            <Frame>
              <Viewport>
                <SheetArea>
                  <DrawingSheet>
                    <Corner />
                    <TopRuler>{[0, 1, 2, 3, 4, 5, 6, 7, 8].map((n) => <HCell key={n}>{n}</HCell>)}</TopRuler>
                    <Corner $right />
                    <SideRuler>{"ABCDEFG".split("").map((n) => <VCell key={n}>{n}</VCell>)}</SideRuler>
                    <div />
                    <SideRuler $right>{"ABCDEFG".split("").map((n) => <VCell key={n}>{n}</VCell>)}</SideRuler>
                  </DrawingSheet>
                  <SheetShadow />
                </SheetArea>
                <ScrollBar>
                  <ScrollArrow aria-label="Scroll up" />
                  <Thumb><i /><i /><i /></Thumb>
                  <ScrollArrow $down aria-label="Scroll down" />
                </ScrollBar>
              </Viewport>
            </Frame>
          </MdiClient>
          <MdiTabs>
            <MdiTab><Icon name="circuit" />Design1</MdiTab>
            <WindowList aria-label="Window list"><Icon name="wins" /></WindowList>
          </MdiTabs>
        </Mdi>

        <RightDock>
          <InstBar>
            {INSTRUMENTS.map((it) => <InstButton key={it.name} aria-label={it.name}><InstIcon it={it} /></InstButton>)}
            <HSep />
            <InstButton $tall aria-label="LabVIEW instruments">
              <svg width="16" height="16" viewBox="0 0 16 16" shapeRendering="crispEdges"><rect x="1" y="2" width="14" height="12" fill="#000" /><path d="M2 1h12M2 15h12" stroke="#999" strokeWidth="2" strokeDasharray="1 1" /><path d="M4 3v11l7-6z" fill="#fe0" /><path d="M12 3v10" stroke="#088" strokeWidth="2" /><path d="M0 5.500h4M11 8.500h5" stroke="#e00" /><path d="M0 10.500h4" stroke="#00e" /><path d="M6 8.500h3M7.500 7v3" stroke="#000" /></svg>
            </InstButton>
            <Flyout aria-label="More LabVIEW instruments" />
            <HSep />
            <InstButton $tall aria-label="ELVIS instruments">
              <svg width="16" height="14" viewBox="0 0 16 14" fill="none" stroke="#aaa"><path d="M0 6l6-4 4 5 3-5 3 4-9 7-6-5M3 5l5 5M5 9l7-6" strokeDasharray="2 1" /></svg>
            </InstButton>
            <Flyout $off aria-label="More ELVIS instruments" />
            <HSep />
            <InstButton $tall aria-label="Current clamp">
              <svg width="16" height="16" viewBox="0 0 16 16" fill="none"><path d="M5 10l4-6" stroke="#000" strokeWidth="3" /><path d="M9 4l1-3 2 1 1 1 3-1" stroke="#000" strokeDasharray="2 1" /><circle cx="4" cy="12" r="3" stroke="#900" strokeWidth="2" /><path d="M2 12.500h14" stroke="#e00" /></svg>
            </InstButton>
          </InstBar>
        </RightDock>
      </Work>

      <Spread>
        <SpreadSide>
          <MiniButton aria-label="Close spreadsheet"><Cross /></MiniButton>
          <MiniButton aria-label="Collapse spreadsheet"><svg width="5" height="7"><path d="M1 0l3 3-3 3z" fill="#999" /></svg></MiniButton>
          <SpreadTitle>Spreadsheet View</SpreadTitle>
        </SpreadSide>
        <SpreadBody>
          <Results><Log><span>Multisim</span><span>-</span><span>2020年5月30日, 14:34:56</span></Log></Results>
          <Tabs>
            <Tab $on>Results</Tab>
            <Tab $w={40}>Nets</Tab>
            <Tab>Components</Tab>
            <Tab>Copper layers</Tab>
            <Tab>Simulation</Tab>
          </Tabs>
        </SpreadBody>
      </Spread>

      <StatusBar>
        <StatusCell $end />
        <StatusCell $w={153}>-</StatusCell>
        <StatusCell $w={183} />
        <StatusCell $w={183}>-</StatusCell>
        <Progress><i /><i /><i /><i /><i /><i /><i /></Progress>
      </StatusBar>
      <Taskbar>
        <Orb aria-label="Start" />
        <TaskButton $dot="#e04838" aria-label="Browser" />
        <TaskButton $dot="#d8b868" aria-label="Explorer" />
        <TaskButton $dot="#6858a0" $active aria-label="Multisim" />
        <TaskSpace />
        <ShowDesktop aria-label="Show desktop" />
      </Taskbar>

      <Ime>
        {IME.map(([n, g]) => <ImeButton key={n} aria-label={n}>{g}</ImeButton>)}
      </Ime>
      <ImeLogo>
        <svg width="30" height="30" viewBox="0 0 30 30">
          <path d="M2 5q0-2 2-2l18-3q3 0 3 2l4 19q0 3-2 4l-17 4q-3 0-4-2z" fill="#f4511e" />
          <path d="M22 8q-13-3-14 2 0 3 8 3 8 1 7 5-2 5-15 3" fill="none" stroke="#fff" strokeWidth="4" />
        </svg>
      </ImeLogo>
      <Ball>56</Ball>

      <Setuna>
        <SetunaHead>
          <svg width="16" height="16" viewBox="0 0 16 16"><rect width="16" height="16" fill="#2c78c0" /><path d="M16 1L5 3l6 5-9 8h4l9-8-7-4 8-1z" fill="#d8ecfa" /></svg>
          <SetunaTitle>SETUNA2</SetunaTitle>
          <SetunaClose aria-label="Close SETUNA2"><svg width="13" height="12"><path d="M2 1l8 9M10 1l-8 9" stroke="#555" strokeWidth="4" /><path d="M2 1l8 9M10 1l-8 9" stroke="#fff" strokeWidth="2" /></svg></SetunaClose>
        </SetunaHead>
        <SetunaBody>
          <SetunaButton $main>截取</SetunaButton>
          <SetunaButton>选项</SetunaButton>
        </SetunaBody>
      </Setuna>
    </Desktop>
  );
}
